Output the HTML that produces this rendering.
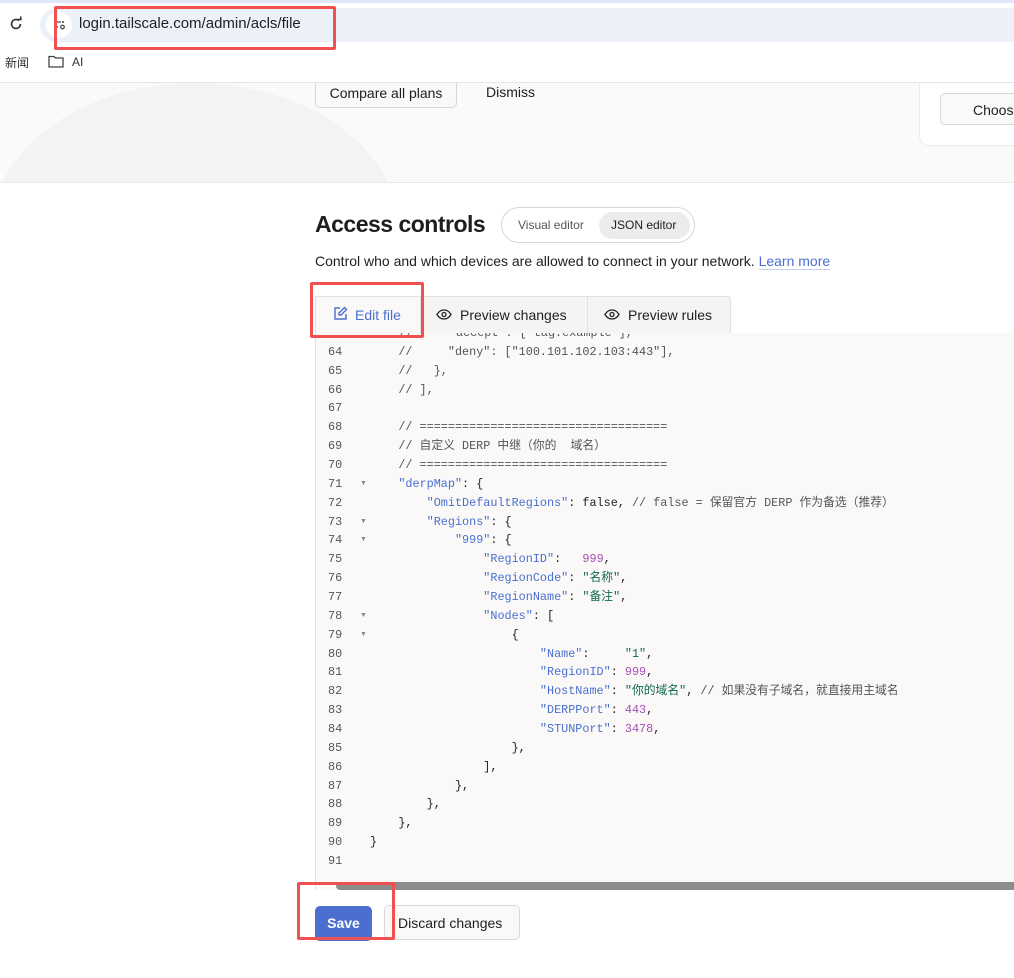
<!DOCTYPE html>
<html><head><meta charset="utf-8"><style>
*{margin:0;padding:0;box-sizing:border-box}
body{width:1014px;height:978px;overflow:hidden;background:#fff;font-family:"Liberation Sans","Noto Sans CJK SC",sans-serif;position:relative;color:#1f1e1e}
.abs{position:absolute}
.code{position:absolute;left:0;font-family:"Liberation Mono","Noto Sans CJK SC",monospace;font-size:11.8px;white-space:pre;color:#222;line-height:18px}
.ln{position:absolute;left:13px;font-family:"Liberation Mono",monospace;font-size:11.8px;color:#555;line-height:18px}
.fold{position:absolute;left:45px;font-size:7px;color:#888;line-height:18px}
.k{color:#4a6fd0}.s{color:#0f6a4a}.n{color:#a34eb5}.c{color:#555}
</style></head><body>
<!-- browser chrome -->
<div class="abs" style="left:0;top:0;width:1014px;height:3px;background:#dfe7f7"></div>
<div class="abs" style="left:40px;top:8px;width:974px;height:34px;background:#ecf0f9;border-radius:17px 0 0 17px"></div>
<svg class="abs" style="left:8px;top:16px" width="16" height="16" viewBox="0 0 16 16"><path d="M12.5 8A4.5 4.5 0 1 1 11 4.6" fill="none" stroke="#333" stroke-width="1.6"/><path d="M9.5 3.5h3.3v-3" fill="none" stroke="#333" stroke-width="1.6"/></svg>
<div class="abs" style="left:46px;top:12px;width:26px;height:26px;border-radius:13px;background:#fff"></div>
<svg class="abs" style="left:54px;top:19px" width="12" height="12" viewBox="0 0 12 12"><path d="M1 3h6M1 8h3" stroke="#444" stroke-width="1.3"/><circle cx="8.5" cy="8" r="1.8" fill="none" stroke="#444" stroke-width="1.2"/><circle cx="9" cy="3" r="1" fill="#444"/></svg>
<div class="abs" style="left:79px;top:15px;font-size:15px;color:#1f1f1f">login.tailscale.com/admin/acls/file</div>
<div class="abs" style="left:54px;top:6px;width:282px;height:44px;border:3px solid #f05050;border-radius:2px"></div>
<div class="abs" style="left:5px;top:54px;font-size:12px;color:#333">新闻</div>
<svg class="abs" style="left:48px;top:55px" width="16" height="13" viewBox="0 0 16 13"><path d="M1 1.5h5l1.5 1.5H15v9H1z" fill="none" stroke="#444" stroke-width="1.3"/></svg>
<div class="abs" style="left:72px;top:55px;font-size:12px;color:#333">AI</div>
<!-- banner -->
<div class="abs" style="left:0;top:82px;width:1014px;height:101px;background:#fafaf9;border-top:1px solid #e5e5e5;border-bottom:1px solid #e8e8e8;overflow:hidden">
 <div class="abs" style="left:-10px;top:0;width:410px;height:300px;border-radius:50%;background:#f4f3f2"></div>
 <div class="abs" style="left:315px;top:-6px;width:142px;height:31px;background:#faf9f8;border:1px solid #d9d7d5;border-radius:5px;font-size:14px;padding-top:7px;text-align:center">Compare all plans</div>
 <div class="abs" style="left:486px;top:1px;font-size:14px">Dismiss</div>
 <div class="abs" style="left:919px;top:-10px;width:120px;height:73px;background:#fff;border:1px solid #ececec;border-radius:10px"></div>
 <div class="abs" style="left:940px;top:10px;width:100px;height:32px;background:#faf9f8;border:1px solid #d9d7d5;border-radius:5px;font-size:14px;padding:8px 0 0 32px">Choos</div>
</div>
<!-- title -->
<div class="abs" style="left:315px;top:211px;font-size:23px;font-weight:bold;letter-spacing:-0.5px">Access controls</div>
<div class="abs" style="left:501px;top:207px;width:194px;height:36px;border:1px solid #d9d7d5;border-radius:18px"></div>
<div class="abs" style="left:518px;top:218px;font-size:12px;color:#555">Visual editor</div>
<div class="abs" style="left:599px;top:212px;width:91px;height:27px;border-radius:14px;background:#eeecea;font-size:12px;padding:6px 0 0 12px">JSON editor</div>
<div class="abs" style="left:315px;top:253px;font-size:14px">Control who and which devices are allowed to connect in your network. <span style="color:#4a6fd0;border-bottom:1px solid #c5d0ee">Learn more</span></div>
<!-- tabs -->
<div class="abs" style="left:315px;top:296px;width:416px;height:38px;background:#f5f4f3;border:1px solid #e3e1df;border-bottom:none;border-radius:4px 4px 0 0"></div>
<div class="abs" style="left:315px;top:296px;width:105px;height:38px;background:#faf9f8;border-left:1px solid #e3e1df;border-top:1px solid #e3e1df"></div>
<div class="abs" style="left:420px;top:296px;width:1px;height:38px;background:#e3e1df"></div>
<div class="abs" style="left:587px;top:296px;width:1px;height:38px;background:#e3e1df"></div>
<svg class="abs" style="left:333px;top:306px" width="15" height="15" viewBox="0 0 15 15"><path d="M7 2H2v11h11V8" fill="none" stroke="#4a6fd0" stroke-width="1.4"/><path d="M11.5 1.5l2 2L8 9H6V7z" fill="none" stroke="#4a6fd0" stroke-width="1.4"/></svg>
<div class="abs" style="left:355px;top:307px;font-size:14px;color:#4a6fd0">Edit file</div>
<svg class="abs" style="left:436px;top:309px" width="16" height="11" viewBox="0 0 16 11"><path d="M1 5.5C3 2 5.5 1 8 1s5 1 7 4.5C13 9 10.5 10 8 10S3 9 1 5.5z" fill="none" stroke="#222" stroke-width="1.3"/><circle cx="8" cy="5.5" r="2" fill="none" stroke="#222" stroke-width="1.3"/></svg>
<div class="abs" style="left:460px;top:307px;font-size:14px">Preview changes</div>
<svg class="abs" style="left:604px;top:309px" width="16" height="11" viewBox="0 0 16 11"><path d="M1 5.5C3 2 5.5 1 8 1s5 1 7 4.5C13 9 10.5 10 8 10S3 9 1 5.5z" fill="none" stroke="#222" stroke-width="1.3"/><circle cx="8" cy="5.5" r="2" fill="none" stroke="#222" stroke-width="1.3"/></svg>
<div class="abs" style="left:628px;top:307px;font-size:14px">Preview rules</div>
<!-- editor -->
<div class="abs" style="left:315px;top:333px;width:699px;height:557px;background:#faf9f8;border-left:1px solid #e3e1df;overflow:hidden">
 <div class="abs" style="left:0;top:0;width:699px;height:549px">
  <div class="code" style="top:-9px;left:55px"><span class="c">    //     "accept": ["tag:example"],</span></div>
 </div>
 <div class="abs" style="left:20px;top:549px;width:680px;height:8px;background:#8c8c8c;border-radius:4px 0 0 4px"></div>
</div>
<div id="lines" class="abs" style="left:315px;top:333px;width:699px;height:549px;overflow:hidden">
<div class="ln" style="top:10px">64</div><div class="code" style="top:10px;left:55px"><span class="c">    //     "deny": ["100.101.102.103:443"],</span></div>
<div class="ln" style="top:29px">65</div><div class="code" style="top:29px;left:55px"><span class="c">    //   },</span></div>
<div class="ln" style="top:48px">66</div><div class="code" style="top:48px;left:55px"><span class="c">    // ],</span></div>
<div class="ln" style="top:66px">67</div>
<div class="ln" style="top:85px">68</div><div class="code" style="top:85px;left:55px"><span class="c">    // ===================================</span></div>
<div class="ln" style="top:104px">69</div><div class="code" style="top:104px;left:55px"><span class="c">    // 自定义 DERP 中继（你的  域名）</span></div>
<div class="ln" style="top:123px">70</div><div class="code" style="top:123px;left:55px"><span class="c">    // ===================================</span></div>
<div class="ln" style="top:142px">71</div><div class="fold" style="top:142px">▼</div><div class="code" style="top:142px;left:55px">    <span class="k">"derpMap"</span>: {</div>
<div class="ln" style="top:161px">72</div><div class="code" style="top:161px;left:55px">        <span class="k">"OmitDefaultRegions"</span>: false, <span class="c">// false = 保留官方 DERP 作为备选（推荐）</span></div>
<div class="ln" style="top:180px">73</div><div class="fold" style="top:180px">▼</div><div class="code" style="top:180px;left:55px">        <span class="k">"Regions"</span>: {</div>
<div class="ln" style="top:198px">74</div><div class="fold" style="top:198px">▼</div><div class="code" style="top:198px;left:55px">            <span class="k">"999"</span>: {</div>
<div class="ln" style="top:217px">75</div><div class="code" style="top:217px;left:55px">                <span class="k">"RegionID"</span>:   <span class="n">999</span>,</div>
<div class="ln" style="top:236px">76</div><div class="code" style="top:236px;left:55px">                <span class="k">"RegionCode"</span>: <span class="s">"名称"</span>,</div>
<div class="ln" style="top:255px">77</div><div class="code" style="top:255px;left:55px">                <span class="k">"RegionName"</span>: <span class="s">"备注"</span>,</div>
<div class="ln" style="top:274px">78</div><div class="fold" style="top:274px">▼</div><div class="code" style="top:274px;left:55px">                <span class="k">"Nodes"</span>: [</div>
<div class="ln" style="top:293px">79</div><div class="fold" style="top:293px">▼</div><div class="code" style="top:293px;left:55px">                    {</div>
<div class="ln" style="top:312px">80</div><div class="code" style="top:312px;left:55px">                        <span class="k">"Name"</span>:     <span class="s">"1"</span>,</div>
<div class="ln" style="top:330px">81</div><div class="code" style="top:330px;left:55px">                        <span class="k">"RegionID"</span>: <span class="n">999</span>,</div>
<div class="ln" style="top:349px">82</div><div class="code" style="top:349px;left:55px">                        <span class="k">"HostName"</span>: <span class="s">"你的域名"</span>, <span class="c">// 如果没有子域名，就直接用主域名</span></div>
<div class="ln" style="top:368px">83</div><div class="code" style="top:368px;left:55px">                        <span class="k">"DERPPort"</span>: <span class="n">443</span>,</div>
<div class="ln" style="top:387px">84</div><div class="code" style="top:387px;left:55px">                        <span class="k">"STUNPort"</span>: <span class="n">3478</span>,</div>
<div class="ln" style="top:406px">85</div><div class="code" style="top:406px;left:55px">                    },</div>
<div class="ln" style="top:425px">86</div><div class="code" style="top:425px;left:55px">                ],</div>
<div class="ln" style="top:444px">87</div><div class="code" style="top:444px;left:55px">            },</div>
<div class="ln" style="top:462px">88</div><div class="code" style="top:462px;left:55px">        },</div>
<div class="ln" style="top:481px">89</div><div class="code" style="top:481px;left:55px">    },</div>
<div class="ln" style="top:500px">90</div><div class="code" style="top:500px;left:55px">}</div>
<div class="ln" style="top:519px">91</div>
</div>
<div class="abs" style="left:310px;top:282px;width:114px;height:56px;border:3px solid #f05050;border-radius:2px"></div>
<!-- buttons -->
<div class="abs" style="left:315px;top:906px;width:57px;height:35px;background:#4a6fd0;border-radius:5px;color:#fff;font-size:14px;font-weight:bold;text-align:center;padding-top:9px">Save</div>
<div class="abs" style="left:384px;top:905px;width:136px;height:35px;background:#faf9f8;border:1px solid #d9d7d5;border-radius:5px;font-size:14px;padding:9px 0 0 13px">Discard changes</div>
<div class="abs" style="left:297px;top:882px;width:98px;height:58px;border:3px solid #f05050;border-radius:2px"></div>
</body></html>
